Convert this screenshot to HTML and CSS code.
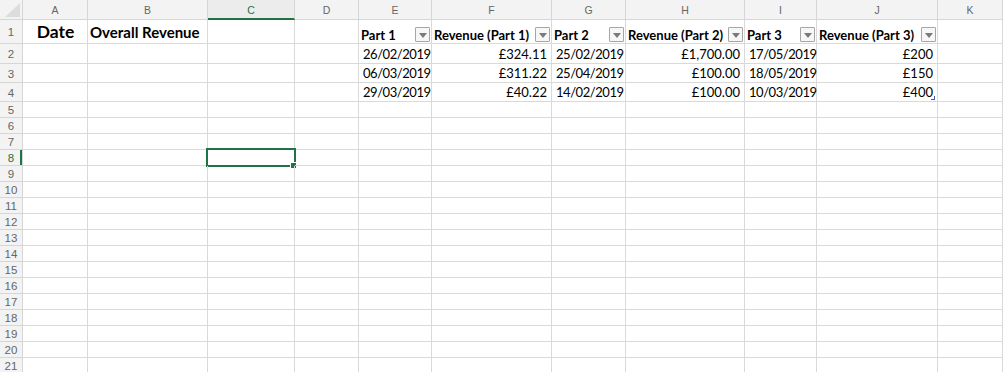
FILE: index.html
```html
<!DOCTYPE html>
<html lang="en">
<head>
<meta charset="utf-8">
<title>Sheet</title>
<link rel="stylesheet" href="styles.css">
</head>
<body>
<div class="sheet">
  <div class="row hdr-row">
    <div class="corner"><span class="tri"></span></div>
    <div class="ch">A</div><div class="ch">B</div><div class="ch sel">C</div><div class="ch">D</div>
    <div class="ch">E</div><div class="ch">F</div><div class="ch">G</div><div class="ch">H</div>
    <div class="ch">I</div><div class="ch">J</div><div class="ch">K</div>
  </div>
  <div class="row r1">
    <div class="rh">1</div>
    <div class="c big center">Date</div>
    <div class="c mid">Overall Revenue</div>
    <div class="c"></div>
    <div class="c"></div>
    <div class="c th"><span>Part 1</span><span class="fb"></span></div>
    <div class="c th"><span>Revenue (Part 1)</span><span class="fb"></span></div>
    <div class="c th"><span>Part 2</span><span class="fb"></span></div>
    <div class="c th"><span>Revenue (Part 2)</span><span class="fb"></span></div>
    <div class="c th"><span>Part 3</span><span class="fb"></span></div>
    <div class="c th"><span>Revenue (Part 3)</span><span class="fb"></span></div>
    <div class="c"></div>
  </div>
  <div class="row r2">
    <div class="rh">2</div><div class="c"></div><div class="c"></div><div class="c"></div><div class="c"></div>
    <div class="c">26/02/2019</div><div class="c num">£324.11</div><div class="c">25/02/2019</div><div class="c num">£1,700.00</div><div class="c">17/05/2019</div><div class="c num">£200</div><div class="c"></div>
  </div>
  <div class="row r3">
    <div class="rh">3</div><div class="c"></div><div class="c"></div><div class="c"></div><div class="c"></div>
    <div class="c">06/03/2019</div><div class="c num">£311.22</div><div class="c">25/04/2019</div><div class="c num">£100.00</div><div class="c">18/05/2019</div><div class="c num">£150</div><div class="c"></div>
  </div>
  <div class="row r3">
    <div class="rh">4</div><div class="c"></div><div class="c"></div><div class="c"></div><div class="c"></div>
    <div class="c">29/03/2019</div><div class="c num">£40.22</div><div class="c">14/02/2019</div><div class="c num">£100.00</div><div class="c">10/03/2019</div><div class="c num">£400<span class="resize"></span></div><div class="c"></div>
  </div>
  <div class="row"><div class="rh">5</div><div class="c"></div><div class="c"></div><div class="c"></div><div class="c"></div><div class="c"></div><div class="c"></div><div class="c"></div><div class="c"></div><div class="c"></div><div class="c"></div><div class="c"></div></div>
  <div class="row"><div class="rh">6</div><div class="c"></div><div class="c"></div><div class="c"></div><div class="c"></div><div class="c"></div><div class="c"></div><div class="c"></div><div class="c"></div><div class="c"></div><div class="c"></div><div class="c"></div></div>
  <div class="row"><div class="rh">7</div><div class="c"></div><div class="c"></div><div class="c"></div><div class="c"></div><div class="c"></div><div class="c"></div><div class="c"></div><div class="c"></div><div class="c"></div><div class="c"></div><div class="c"></div></div>
  <div class="row"><div class="rh rsel">8</div><div class="c"></div><div class="c"></div><div class="c active"><span class="handle"></span></div><div class="c"></div><div class="c"></div><div class="c"></div><div class="c"></div><div class="c"></div><div class="c"></div><div class="c"></div><div class="c"></div></div>
  <div class="row"><div class="rh">9</div><div class="c"></div><div class="c"></div><div class="c"></div><div class="c"></div><div class="c"></div><div class="c"></div><div class="c"></div><div class="c"></div><div class="c"></div><div class="c"></div><div class="c"></div></div>
  <div class="row"><div class="rh">10</div><div class="c"></div><div class="c"></div><div class="c"></div><div class="c"></div><div class="c"></div><div class="c"></div><div class="c"></div><div class="c"></div><div class="c"></div><div class="c"></div><div class="c"></div></div>
  <div class="row"><div class="rh">11</div><div class="c"></div><div class="c"></div><div class="c"></div><div class="c"></div><div class="c"></div><div class="c"></div><div class="c"></div><div class="c"></div><div class="c"></div><div class="c"></div><div class="c"></div></div>
  <div class="row"><div class="rh">12</div><div class="c"></div><div class="c"></div><div class="c"></div><div class="c"></div><div class="c"></div><div class="c"></div><div class="c"></div><div class="c"></div><div class="c"></div><div class="c"></div><div class="c"></div></div>
  <div class="row"><div class="rh">13</div><div class="c"></div><div class="c"></div><div class="c"></div><div class="c"></div><div class="c"></div><div class="c"></div><div class="c"></div><div class="c"></div><div class="c"></div><div class="c"></div><div class="c"></div></div>
  <div class="row"><div class="rh">14</div><div class="c"></div><div class="c"></div><div class="c"></div><div class="c"></div><div class="c"></div><div class="c"></div><div class="c"></div><div class="c"></div><div class="c"></div><div class="c"></div><div class="c"></div></div>
  <div class="row"><div class="rh">15</div><div class="c"></div><div class="c"></div><div class="c"></div><div class="c"></div><div class="c"></div><div class="c"></div><div class="c"></div><div class="c"></div><div class="c"></div><div class="c"></div><div class="c"></div></div>
  <div class="row"><div class="rh">16</div><div class="c"></div><div class="c"></div><div class="c"></div><div class="c"></div><div class="c"></div><div class="c"></div><div class="c"></div><div class="c"></div><div class="c"></div><div class="c"></div><div class="c"></div></div>
  <div class="row"><div class="rh">17</div><div class="c"></div><div class="c"></div><div class="c"></div><div class="c"></div><div class="c"></div><div class="c"></div><div class="c"></div><div class="c"></div><div class="c"></div><div class="c"></div><div class="c"></div></div>
  <div class="row"><div class="rh">18</div><div class="c"></div><div class="c"></div><div class="c"></div><div class="c"></div><div class="c"></div><div class="c"></div><div class="c"></div><div class="c"></div><div class="c"></div><div class="c"></div><div class="c"></div></div>
  <div class="row"><div class="rh">19</div><div class="c"></div><div class="c"></div><div class="c"></div><div class="c"></div><div class="c"></div><div class="c"></div><div class="c"></div><div class="c"></div><div class="c"></div><div class="c"></div><div class="c"></div></div>
  <div class="row"><div class="rh">20</div><div class="c"></div><div class="c"></div><div class="c"></div><div class="c"></div><div class="c"></div><div class="c"></div><div class="c"></div><div class="c"></div><div class="c"></div><div class="c"></div><div class="c"></div></div>
  <div class="row"><div class="rh">21</div><div class="c"></div><div class="c"></div><div class="c"></div><div class="c"></div><div class="c"></div><div class="c"></div><div class="c"></div><div class="c"></div><div class="c"></div><div class="c"></div><div class="c"></div></div>
</div>
</body>
</html>
```

FILE: styles.css
```css
*, *::before, *::after { box-sizing: border-box; }
html, body { margin: 0; padding: 0; background: #fff; overflow: hidden; }
body { font-family: Lato, "Open Sans", sans-serif; color: #000; }

.sheet { width: 1003px; }

.row {
  display: grid;
  grid-template-columns: 23px 65px 120px 87px 64px 73px 120px 74px 119px 72px 121px 1fr;
  height: 16px;
}
.hdr-row { height: 20px; }
.r1 { height: 24px; }
.r2 { height: 20px; }
.r3 { height: 19px; }

.corner, .ch, .rh {
  background: #f3f3f3;
  border-right: 1px solid #d6d6d6;
  border-bottom: 1px solid #d6d6d6;
  color: #666;
  font-family: "Liberation Sans", Arial, sans-serif;
}
.corner { position: relative; }
.tri {
  position: absolute;
  left: 5px; top: 3px;
  width: 0; height: 0;
  border-left: 15px solid transparent;
  border-bottom: 14px solid #dcdcdc;
}
.ch {
  display: flex;
  align-items: center;
  justify-content: center;
  font-size: 10.5px;
  padding-top: 1px;
}
.ch.sel {
  color: #217346;
  border-bottom: 2px solid #217346;
  background: #ececec;
}
.rh {
  display: flex;
  align-items: center;
  justify-content: center;
  font-size: 11.5px;
  padding-top: 1px;
}
.rh.rsel {
  color: #217346;
  box-shadow: inset -2px 0 0 #217346;
}

.c {
  border-right: 1px solid #d9d9d9;
  border-bottom: 1px solid #d9d9d9;
  display: flex;
  align-items: flex-end;
  padding: 0 3px 1px 4px;
  font-size: 13px;
  line-height: 16px;
  letter-spacing: -0.45px;
  white-space: nowrap;
  position: relative;
}
.num { justify-content: flex-end; padding-right: 4px; letter-spacing: 0; }
.center { justify-content: center; }
.big { font-size: 17.5px; font-weight: 700; padding-bottom: 1px; line-height: 20px; letter-spacing: 0; }
.mid { font-size: 15px; font-weight: 700; padding-left: 2px; line-height: 20px; letter-spacing: 0; }

.th {
  font-weight: 700;
  justify-content: space-between;
  padding: 0 1px 1px 2px;
  align-items: flex-end;
  letter-spacing: 0;
}
.th span:first-child { line-height: 14px; }
.fb {
  width: 15px;
  height: 15px;
  border: 1px solid #a6a6a6;
  background: #f7f7f7;
  border-radius: 1px;
  display: flex;
  align-items: center;
  justify-content: center;
  flex: none;
}
.fb::after {
  content: "";
  width: 0; height: 0;
  border-left: 4px solid transparent;
  border-right: 4px solid transparent;
  border-top: 5px solid #7a7a7a;
  margin-top: 1px;
}

.resize {
  position: absolute;
  right: 2px;
  bottom: 1px;
  width: 4px; height: 4px;
  border-right: 1px solid #3a62b5;
  border-bottom: 1px solid #3a62b5;
}

.active::before {
  content: "";
  position: absolute;
  left: -2px; top: -2px;
  width: 90px; height: 19px;
  border: 2px solid #217346;
}
.handle {
  position: absolute;
  left: 82px; top: 12px;
  width: 7px; height: 7px;
  background: #217346;
  border: 1px solid #fff;
}
```
